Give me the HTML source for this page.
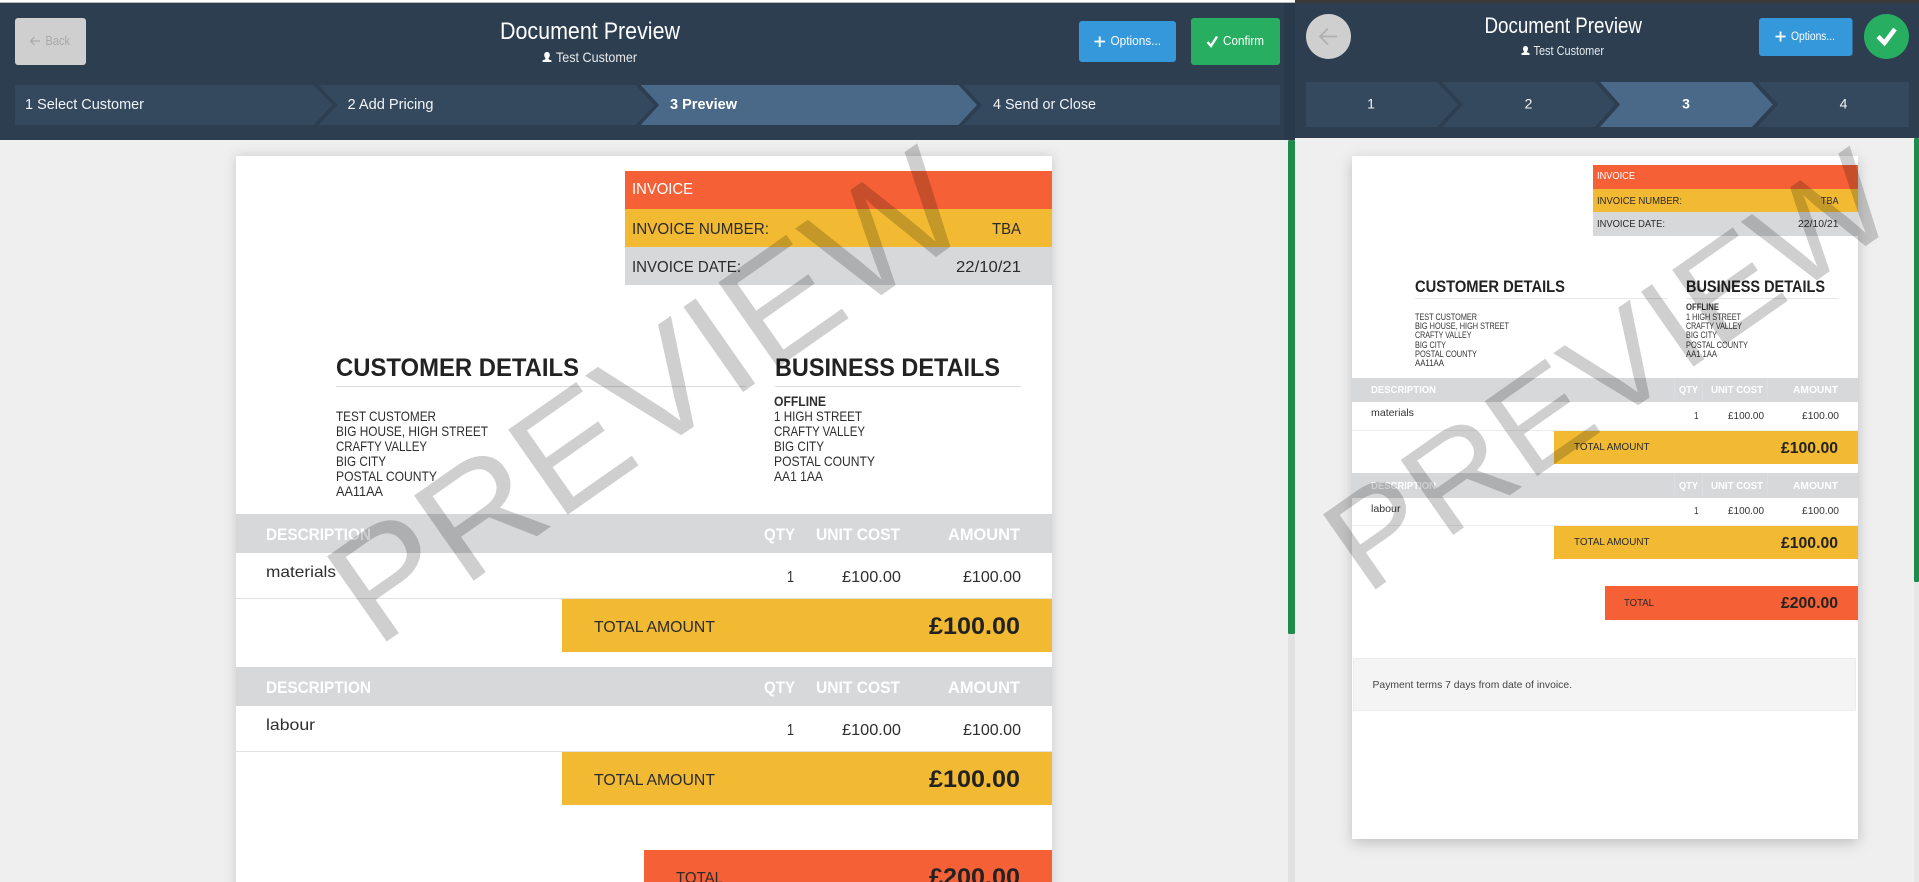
<!DOCTYPE html>
<html lang="en"><head><meta charset="utf-8"><title>Document Preview</title>
<style>
html,body{margin:0;padding:0;background:#efefef;width:1919px;height:882px;overflow:hidden}
svg{display:block;font-family:"Liberation Sans",Arial,sans-serif}
.b{font-weight:700}
.d{fill:#2b2b2b}.w{fill:#fff}
</style></head><body>
<svg xmlns="http://www.w3.org/2000/svg" width="1919" height="882" viewBox="0 0 1919 882">
<defs>
<filter id="s1" x="-10%" y="-10%" width="120%" height="120%"><feDropShadow dx="0" dy="0" stdDeviation="6" flood-color="#000" flood-opacity=".16"/></filter>
<filter id="s2" x="-10%" y="-10%" width="120%" height="120%"><feDropShadow dx="0" dy="4" stdDeviation="7" flood-color="#000" flood-opacity=".2"/></filter>
</defs>

<rect width="1919" height="882" fill="#efefef"/>

<!-- LEFT PAGE -->
<rect x="236" y="156" width="816" height="760" fill="#fff" filter="url(#s1)"/>
<rect x="625" y="171" width="427" height="38" fill="#f56036"/>
<rect x="625" y="209" width="427" height="38" fill="#f1ba32"/>
<rect x="625" y="247" width="427" height="38" fill="#d7d8da"/>
<g font-size="16">
<text class="w" x="632" y="194" textLength="61" lengthAdjust="spacingAndGlyphs">INVOICE</text>
<text class="d" x="632" y="234" textLength="137" lengthAdjust="spacingAndGlyphs">INVOICE NUMBER:</text>
<text class="d" x="992" y="234" textLength="29" lengthAdjust="spacingAndGlyphs">TBA</text>
<text class="d" x="632" y="272" textLength="109" lengthAdjust="spacingAndGlyphs">INVOICE DATE:</text>
<text class="d" x="956" y="272" textLength="65" lengthAdjust="spacingAndGlyphs">22/10/21</text>
</g>
<g class="b" font-size="25" fill="#222">
<text x="336" y="376" textLength="243" lengthAdjust="spacingAndGlyphs">CUSTOMER DETAILS</text>
<text x="775" y="376" textLength="225" lengthAdjust="spacingAndGlyphs">BUSINESS DETAILS</text>
</g>
<rect x="336" y="386" width="410" height="1" fill="#ddd"/>
<rect x="775" y="386" width="246" height="1" fill="#ddd"/>
<g font-size="14" fill="#2e2e2e">
<text x="336" y="421" textLength="100" lengthAdjust="spacingAndGlyphs">TEST CUSTOMER</text>
<text x="336" y="436" textLength="152" lengthAdjust="spacingAndGlyphs">BIG HOUSE, HIGH STREET</text>
<text x="336" y="451" textLength="91" lengthAdjust="spacingAndGlyphs">CRAFTY VALLEY</text>
<text x="336" y="466" textLength="50" lengthAdjust="spacingAndGlyphs">BIG CITY</text>
<text x="336" y="481" textLength="101" lengthAdjust="spacingAndGlyphs">POSTAL COUNTY</text>
<text x="336" y="496" textLength="47" lengthAdjust="spacingAndGlyphs">AA11AA</text>
<text class="b" x="774" y="406" textLength="52" lengthAdjust="spacingAndGlyphs">OFFLINE</text>
<text x="774" y="421" textLength="88" lengthAdjust="spacingAndGlyphs">1 HIGH STREET</text>
<text x="774" y="436" textLength="91" lengthAdjust="spacingAndGlyphs">CRAFTY VALLEY</text>
<text x="774" y="451" textLength="50" lengthAdjust="spacingAndGlyphs">BIG CITY</text>
<text x="774" y="466" textLength="101" lengthAdjust="spacingAndGlyphs">POSTAL COUNTY</text>
<text x="774" y="481" textLength="49" lengthAdjust="spacingAndGlyphs">AA1 1AA</text>
</g>

<!-- left table 1 -->
<rect x="236" y="514" width="816" height="39" fill="#d7d8da"/>
<g class="b w" font-size="16.500">
<text x="266" y="540" textLength="105" lengthAdjust="spacingAndGlyphs">DESCRIPTION</text>
<text x="764" y="540" textLength="31" lengthAdjust="spacingAndGlyphs">QTY</text>
<text x="816" y="540" textLength="84" lengthAdjust="spacingAndGlyphs">UNIT COST</text>
<text x="948" y="540" textLength="72" lengthAdjust="spacingAndGlyphs">AMOUNT</text>
</g>
<g font-size="16" fill="#2e2e2e">
<text x="266" y="577" textLength="70" lengthAdjust="spacingAndGlyphs">materials</text>
<text x="787" y="582" textLength="7" lengthAdjust="spacingAndGlyphs">1</text>
<text x="842" y="582" textLength="59" lengthAdjust="spacingAndGlyphs">£100.00</text>
<text x="963" y="582" textLength="58" lengthAdjust="spacingAndGlyphs">£100.00</text>
</g>
<rect x="236" y="598" width="816" height="1" fill="#e0e0e0"/>
<rect x="562" y="599" width="490" height="53" fill="#f1ba32"/>
<text class="d" font-size="16" x="594" y="632" textLength="121" lengthAdjust="spacingAndGlyphs">TOTAL AMOUNT</text>
<text class="b" font-size="24.500" fill="#222" x="929" y="634" textLength="91" lengthAdjust="spacingAndGlyphs">£100.00</text>

<!-- left table 2 -->
<rect x="236" y="667" width="816" height="39" fill="#d7d8da"/>
<g class="b w" font-size="16.500">
<text x="266" y="693" textLength="105" lengthAdjust="spacingAndGlyphs">DESCRIPTION</text>
<text x="764" y="693" textLength="31" lengthAdjust="spacingAndGlyphs">QTY</text>
<text x="816" y="693" textLength="84" lengthAdjust="spacingAndGlyphs">UNIT COST</text>
<text x="948" y="693" textLength="72" lengthAdjust="spacingAndGlyphs">AMOUNT</text>
</g>
<g font-size="16" fill="#2e2e2e">
<text x="266" y="730" textLength="49" lengthAdjust="spacingAndGlyphs">labour</text>
<text x="787" y="735" textLength="7" lengthAdjust="spacingAndGlyphs">1</text>
<text x="842" y="735" textLength="59" lengthAdjust="spacingAndGlyphs">£100.00</text>
<text x="963" y="735" textLength="58" lengthAdjust="spacingAndGlyphs">£100.00</text>
</g>
<rect x="236" y="751" width="816" height="1" fill="#e0e0e0"/>
<rect x="562" y="752" width="490" height="53" fill="#f1ba32"/>
<text class="d" font-size="16" x="594" y="785" textLength="121" lengthAdjust="spacingAndGlyphs">TOTAL AMOUNT</text>
<text class="b" font-size="24.500" fill="#222" x="929" y="787" textLength="91" lengthAdjust="spacingAndGlyphs">£100.00</text>

<rect x="644" y="850" width="408" height="40" fill="#f56036"/>
<text class="d" font-size="16" x="676" y="883" textLength="47" lengthAdjust="spacingAndGlyphs">TOTAL</text>
<text class="b" font-size="24.500" fill="#222" x="929" y="885" textLength="91" lengthAdjust="spacingAndGlyphs">£200.00</text>

<!-- left watermark -->
<text transform="translate(376 649) rotate(-35)" font-size="151" fill="#000" fill-opacity=".19" textLength="734" lengthAdjust="spacingAndGlyphs">PREVIEW</text>

<!-- LEFT HEADER -->
<rect x="0" y="0" width="1295" height="3" fill="#fff"/>
<rect x="0" y="2" width="1295" height="1" fill="#bbb"/>
<rect x="0" y="3" width="1295" height="137" fill="#2c3e50"/>
<rect x="1284" y="3" width="11" height="137" fill="#293a4c"/>
<rect x="15" y="18" width="71" height="47" rx="3" fill="#cfcfcf"/>
<path d="M40 41H30.500M34.500 37l-4 4 4 4" fill="none" stroke="#aaa" stroke-width="1.200"/>
<text x="45.500" y="45" font-size="13" fill="#aaa" textLength="24.500" lengthAdjust="spacingAndGlyphs">Back</text>
<text class="w" x="500" y="39" font-size="24" textLength="180" lengthAdjust="spacingAndGlyphs">Document Preview</text>
<path d="M547 52c1.700 0 2.800 1.300 2.800 3 0 1.300-.5 2.300-1.200 3v1.300c.9.500 2.100.8 2.900 1.200V62h-9v-1.500c.8-.4 2-.7 2.900-1.200V58c-.7-.7-1.200-1.700-1.200-3 0-1.700 1.100-3 2.800-3z" fill="#fff"/>
<text x="556" y="62" font-size="14" fill="#e6e9ec" textLength="81" lengthAdjust="spacingAndGlyphs">Test Customer</text>

<rect x="1079" y="21" width="97" height="41" rx="3" fill="#3498db"/>
<path d="M1094.500 41.500h10.500M1099.700 36.500v10.500" stroke="#fff" stroke-width="1.800" fill="none"/>
<text class="w" x="1110.500" y="45" font-size="13" textLength="50.500" lengthAdjust="spacingAndGlyphs">Options...</text>
<rect x="1191" y="18" width="89" height="47" rx="3" fill="#27ae60"/>
<path d="M1207.500 42l3.500 4 6-9.500" stroke="#fff" stroke-width="2.400" fill="none"/>
<text class="w" x="1223" y="45" font-size="13" textLength="41" lengthAdjust="spacingAndGlyphs">Confirm</text>

<rect x="15" y="85" width="1265" height="40" fill="#34495e"/>
<polygon points="640.600,85 958.600,85 977,105 958.600,125 640.600,125 659,105" fill="#4a6888"/>
<polygon points="313.500,85 332.500,105 313.500,125 318.600,125 337.500,105 318.600,85" fill="#2c3e50"/>
<polygon points="635.500,85 654.500,105 635.500,125 640.600,125 659,105 640.600,85" fill="#2c3e50"/>
<polygon points="958.600,85 977,105 958.600,125 963.500,125 982,105 963.500,85" fill="#2c3e50"/>
<g font-size="15" fill="#f2f4f6">
<text x="25" y="109" textLength="119" lengthAdjust="spacingAndGlyphs">1 Select Customer</text>
<text x="347.500" y="109" textLength="86" lengthAdjust="spacingAndGlyphs">2 Add Pricing</text>
<text class="b" x="670" y="109" fill="#fff" textLength="67" lengthAdjust="spacingAndGlyphs">3 Preview</text>
<text x="993" y="109" textLength="103" lengthAdjust="spacingAndGlyphs">4 Send or Close</text>
</g>

<!-- LEFT SCROLLBAR -->
<rect x="1288" y="140" width="7" height="742" fill="#e2e2e2"/>
<rect x="1288" y="140" width="7" height="494" rx="1.500" fill="#1e8a4c"/>

<!-- RIGHT PANEL -->
<rect x="1295" y="138" width="624" height="744" fill="#efefef"/>
<rect x="1352" y="156" width="506" height="683" fill="#fff" filter="url(#s2)"/>
<rect x="1593" y="165" width="265" height="24" fill="#f56036"/>
<rect x="1593" y="189" width="265" height="23" fill="#f1ba32"/>
<rect x="1593" y="212" width="265" height="24" fill="#d7d8da"/>
<g font-size="10.500">
<text class="w" x="1597" y="179" textLength="38" lengthAdjust="spacingAndGlyphs">INVOICE</text>
<text class="d" x="1597" y="204" textLength="85" lengthAdjust="spacingAndGlyphs">INVOICE NUMBER:</text>
<text class="d" x="1821" y="204" textLength="17.500" lengthAdjust="spacingAndGlyphs">TBA</text>
<text class="d" x="1597" y="227" textLength="68" lengthAdjust="spacingAndGlyphs">INVOICE DATE:</text>
<text class="d" x="1798" y="227" textLength="40.500" lengthAdjust="spacingAndGlyphs">22/10/21</text>
</g>
<g class="b" font-size="16.500" fill="#222">
<text x="1415" y="292" textLength="150" lengthAdjust="spacingAndGlyphs">CUSTOMER DETAILS</text>
<text x="1686" y="292" textLength="139" lengthAdjust="spacingAndGlyphs">BUSINESS DETAILS</text>
</g>
<rect x="1415" y="298" width="252" height="1" fill="#e6e6e6"/>
<rect x="1686" y="298" width="152" height="1" fill="#e6e6e6"/>
<g font-size="9" fill="#333">
<text x="1415" y="320" textLength="62" lengthAdjust="spacingAndGlyphs">TEST CUSTOMER</text>
<text x="1415" y="329" textLength="94" lengthAdjust="spacingAndGlyphs">BIG HOUSE, HIGH STREET</text>
<text x="1415" y="338" textLength="56.500" lengthAdjust="spacingAndGlyphs">CRAFTY VALLEY</text>
<text x="1415" y="348" textLength="31" lengthAdjust="spacingAndGlyphs">BIG CITY</text>
<text x="1415" y="357" textLength="62" lengthAdjust="spacingAndGlyphs">POSTAL COUNTY</text>
<text x="1415" y="366" textLength="29" lengthAdjust="spacingAndGlyphs">AA11AA</text>
<text class="b" x="1686" y="310" textLength="33" lengthAdjust="spacingAndGlyphs">OFFLINE</text>
<text x="1686" y="320" textLength="55" lengthAdjust="spacingAndGlyphs">1 HIGH STREET</text>
<text x="1686" y="329" textLength="56" lengthAdjust="spacingAndGlyphs">CRAFTY VALLEY</text>
<text x="1686" y="338" textLength="31" lengthAdjust="spacingAndGlyphs">BIG CITY</text>
<text x="1686" y="348" textLength="62" lengthAdjust="spacingAndGlyphs">POSTAL COUNTY</text>
<text x="1686" y="357" textLength="31" lengthAdjust="spacingAndGlyphs">AA1 1AA</text>
</g>

<!-- right table 1 -->
<rect x="1352" y="378" width="506" height="24" fill="#d7d8da"/>
<path d="M1674.500 378v24M1702.500 378v24M1767.500 378v24" stroke="#dcdde0" fill="none"/>
<g class="b w" font-size="10.500">
<text x="1371" y="393" textLength="65" lengthAdjust="spacingAndGlyphs">DESCRIPTION</text>
<text x="1679" y="393" textLength="19" lengthAdjust="spacingAndGlyphs">QTY</text>
<text x="1711" y="393" textLength="52" lengthAdjust="spacingAndGlyphs">UNIT COST</text>
<text x="1793" y="393" textLength="45" lengthAdjust="spacingAndGlyphs">AMOUNT</text>
</g>
<g font-size="10.500" fill="#333">
<text x="1371" y="416" textLength="43" lengthAdjust="spacingAndGlyphs">materials</text>
<text x="1694" y="419" textLength="4.500" lengthAdjust="spacingAndGlyphs">1</text>
<text x="1728" y="419" textLength="36" lengthAdjust="spacingAndGlyphs">£100.00</text>
<text x="1802" y="419" textLength="37" lengthAdjust="spacingAndGlyphs">£100.00</text>
</g>
<rect x="1352" y="430" width="506" height="1" fill="#eee"/>
<rect x="1554" y="431" width="304" height="33" fill="#f1ba32"/>
<text class="d" font-size="10.500" x="1574" y="450" textLength="75.500" lengthAdjust="spacingAndGlyphs">TOTAL AMOUNT</text>
<text class="b" font-size="15.500" fill="#222" x="1781" y="453" textLength="57" lengthAdjust="spacingAndGlyphs">£100.00</text>

<!-- right table 2 -->
<rect x="1352" y="473" width="506" height="25" fill="#d7d8da"/>
<path d="M1674.500 473v25M1702.500 473v25M1767.500 473v25" stroke="#dcdde0" fill="none"/>
<g class="b w" font-size="10.500">
<text x="1371" y="489" textLength="65" lengthAdjust="spacingAndGlyphs">DESCRIPTION</text>
<text x="1679" y="489" textLength="19" lengthAdjust="spacingAndGlyphs">QTY</text>
<text x="1711" y="489" textLength="52" lengthAdjust="spacingAndGlyphs">UNIT COST</text>
<text x="1793" y="489" textLength="45" lengthAdjust="spacingAndGlyphs">AMOUNT</text>
</g>
<g font-size="10.500" fill="#333">
<text x="1371" y="512" textLength="29.500" lengthAdjust="spacingAndGlyphs">labour</text>
<text x="1694" y="514" textLength="4.500" lengthAdjust="spacingAndGlyphs">1</text>
<text x="1728" y="514" textLength="36" lengthAdjust="spacingAndGlyphs">£100.00</text>
<text x="1802" y="514" textLength="37" lengthAdjust="spacingAndGlyphs">£100.00</text>
</g>
<rect x="1352" y="525" width="506" height="1" fill="#eee"/>
<rect x="1554" y="526" width="304" height="33" fill="#f1ba32"/>
<text class="d" font-size="10.500" x="1574" y="545" textLength="75.500" lengthAdjust="spacingAndGlyphs">TOTAL AMOUNT</text>
<text class="b" font-size="15.500" fill="#222" x="1781" y="548" textLength="57" lengthAdjust="spacingAndGlyphs">£100.00</text>

<rect x="1605" y="586" width="253" height="34" fill="#f56036"/>
<text class="d" font-size="10.500" x="1624" y="606" textLength="30" lengthAdjust="spacingAndGlyphs">TOTAL</text>
<text class="b" font-size="15.500" fill="#222" x="1781" y="608" textLength="57" lengthAdjust="spacingAndGlyphs">£200.00</text>

<rect x="1353.500" y="658.500" width="502" height="52" fill="#f4f4f4" stroke="#eeeeee"/>
<text x="1372.500" y="688" font-size="10.500" fill="#444" textLength="199.500" lengthAdjust="spacingAndGlyphs">Payment terms 7 days from date of invoice.</text>

<!-- right watermark -->
<text transform="translate(1366 596) rotate(-35)" font-size="133" fill="#000" fill-opacity=".19" textLength="655" lengthAdjust="spacingAndGlyphs">PREVIEW</text>

<!-- RIGHT HEADER -->
<rect x="1295" y="0" width="624" height="3" fill="#3a3a3a"/>
<rect x="1295" y="3" width="624" height="135" fill="#2c3e50"/>
<circle cx="1328.500" cy="36.500" r="22.500" fill="#cfcfcf"/>
<path d="M1337 36.500h-16M1328 28.500l-8 8 8 8" fill="none" stroke="#b0b0b0" stroke-width="1.800"/>
<text class="w" x="1484.500" y="33" font-size="22" textLength="157.500" lengthAdjust="spacingAndGlyphs">Document Preview</text>
<path d="M1525.500 46c1.500 0 2.500 1.200 2.500 2.700 0 1.100-.4 2-1 2.600v1c.8.400 1.800.7 2.500 1V55h-8v-1.700c.7-.3 1.700-.6 2.500-1v-1c-.6-.6-1-1.500-1-2.600 0-1.500 1-2.700 2.500-2.700z" fill="#fff"/>
<text x="1533.500" y="55" font-size="13" fill="#e6e9ec" textLength="70.500" lengthAdjust="spacingAndGlyphs">Test Customer</text>
<rect x="1759" y="18" width="93.500" height="38" rx="3" fill="#3498db"/>
<path d="M1775.500 36.500h10M1780.500 31.500v10" stroke="#fff" stroke-width="1.800" fill="none"/>
<text class="w" x="1791" y="40" font-size="11.500" textLength="44" lengthAdjust="spacingAndGlyphs">Options...</text>
<circle cx="1886.500" cy="36.500" r="22.500" fill="#27ae60"/>
<path d="M1878 36.500l6.500 6.500 10.500-14" stroke="#fff" stroke-width="4.500" fill="none"/>

<rect x="1306" y="82" width="603" height="45" fill="#34495e"/>
<polygon points="1600,82 1752,82 1773,104.500 1752,127 1600,127 1620,104.500" fill="#4a6888"/>
<polygon points="1437,82 1458,104.500 1437,127 1442,127 1463,104.500 1442,82" fill="#2c3e50"/>
<polygon points="1595,82 1615,104.500 1595,127 1600,127 1620,104.500 1600,82" fill="#2c3e50"/>
<polygon points="1752,82 1773,104.500 1752,127 1757.500,127 1778,104.500 1757.500,82" fill="#2c3e50"/>
<g font-size="14" fill="#f2f4f6" text-anchor="middle">
<text x="1371" y="108.500">1</text>
<text x="1528.500" y="108.500">2</text>
<text class="b" x="1686" y="108.500" fill="#fff">3</text>
<text x="1843.500" y="108.500">4</text>
</g>

<!-- RIGHT SCROLLBAR -->
<rect x="1914" y="138" width="5" height="744" fill="#e6e6e6"/>
<rect x="1914" y="138" width="5" height="444" rx="1.500" fill="#1e8a4c"/>
</svg>
</body></html>
